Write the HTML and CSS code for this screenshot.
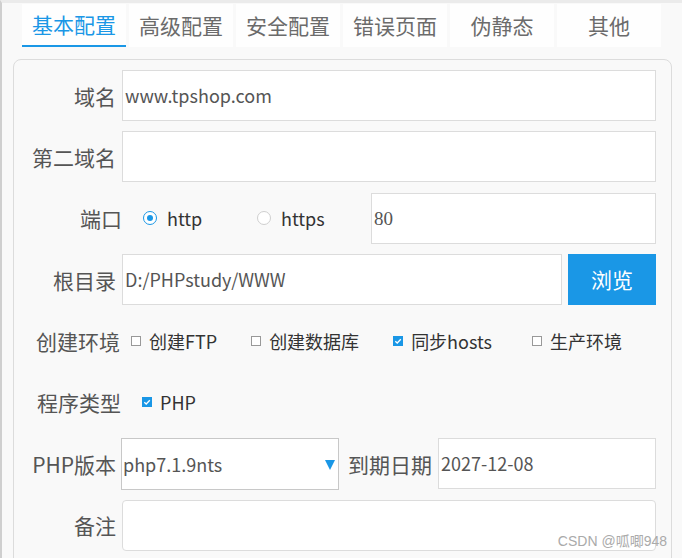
FILE: index.html
```html
<!DOCTYPE html>
<html lang="zh">
<head>
<meta charset="utf-8">
<title>站点配置</title>
<link rel="stylesheet" href="styles.css">
</head>
<body>
<div class="page">
  <nav class="tabs">
    <div class="tab active">基本配置</div>
    <div class="tab">高级配置</div>
    <div class="tab">安全配置</div>
    <div class="tab">错误页面</div>
    <div class="tab">伪静态</div>
    <div class="tab">其他</div>
  </nav>
  <div class="panel">
    <div class="row">
      <div class="label">域名</div>
      <div class="field grow">www.tpshop.com</div>
    </div>
    <div class="row">
      <div class="label">第二域名</div>
      <div class="field grow"></div>
    </div>
    <div class="row">
      <div class="label label-wide">端口</div>
      <div class="radios">
        <span class="radio-item first"><span class="radio on"></span><span class="opt">http</span></span>
        <span class="radio-item"><span class="radio"></span><span class="opt">https</span></span>
      </div>
      <div class="field grow num">80</div>
    </div>
    <div class="row">
      <div class="label">根目录</div>
      <div class="field grow">D:/PHPstudy/WWW</div>
      <div class="btn">浏览</div>
    </div>
    <div class="row">
      <div class="label label-env">创建环境</div>
      <div class="checks">
        <span class="check-item"><span class="box"></span><span class="opt">创建FTP</span></span>
        <span class="check-item"><span class="box"></span><span class="opt">创建数据库</span></span>
        <span class="check-item"><span class="box on"><svg viewBox="0 0 10 10" width="10" height="10"><path d="M2.3 5.2 L4.2 7 L7.8 3.2" fill="none" stroke="#fff" stroke-width="1.3"/></svg></span><span class="opt">同步hosts</span></span>
        <span class="check-item last"><span class="box"></span><span class="opt">生产环境</span></span>
      </div>
    </div>
    <div class="row">
      <div class="label label-type">程序类型</div>
      <div class="checks checks-type">
        <span class="check-item"><span class="box on"><svg viewBox="0 0 10 10" width="10" height="10"><path d="M2.3 5.2 L4.2 7 L7.8 3.2" fill="none" stroke="#fff" stroke-width="1.3"/></svg></span><span class="opt">PHP</span></span>
      </div>
    </div>
    <div class="row">
      <div class="label">PHP版本</div>
      <div class="select">php7.1.9nts<span class="arrow"></span></div>
      <div class="label-mid">到期日期</div>
      <div class="field grow">2027-12-08</div>
    </div>
    <div class="row">
      <div class="label">备注</div>
      <div class="field grow note"></div>
    </div>
  </div>
  <div class="watermark">CSDN @呱唧948</div>
</div>
</body>
</html>
```
FILE: styles.css
```css
html, body {
  margin: 0;
  padding: 0;
}
body {
  width: 682px;
  height: 558px;
  overflow: hidden;
  background: #f9f9f9;
  font-family: "Noto Sans CJK SC", "Noto Sans", sans-serif;
}
.page {
  position: relative;
  height: 555px;
  border-top: 3px solid #ebebeb;
  border-left: 2px solid #cfcfcf;
}
.tabs {
  display: flex;
  margin-left: 20px;
  margin-top: 1px;
  height: 43px;
}
.tab {
  width: 104px;
  margin-right: 3px;
  background: #fefefe;
  color: #6b6b6b;
  font-size: 21px;
  line-height: 43px;
  text-align: center;
  box-sizing: border-box;
}
.tab.active {
  color: #1a97e6;
  border-bottom: 2px solid #1a97e6;
  line-height: 41px;
}
.panel {
  margin-top: 12px;
  margin-left: 11px;
  width: 659px;
  height: 510px;
  box-sizing: border-box;
  border: 1px solid #dcdcdc;
  border-radius: 8px;
  padding: 10px 15px 0 0;
  display: flex;
  flex-direction: column;
  gap: 10.4px;
}
.row {
  display: flex;
  align-items: center;
  height: 51px;
}
.label {
  width: 102px;
  margin-right: 6px;
  text-align: right;
  font-size: 21px;
  color: #555;
  flex: none;
}
.label-wide { width: 108px; margin-right: 0; }
.label-env { width: 106px; margin-right: 0; }
.label-type { width: 107px; margin-right: 0; }
.field {
  height: 51px;
  box-sizing: border-box;
  border: 1px solid #dcdcdc;
  background: #fff;
  font-size: 18px;
  color: #555;
  line-height: 49px;
  padding-left: 2px;
}
.grow { flex: 1; }
.num { font-family: "Liberation Serif", serif; font-size: 19px; }
.note { border-radius: 4px; }
.radios {
  display: flex;
  align-items: center;
  margin-left: 21px;
}
.radio-item {
  display: flex;
  align-items: center;
  width: 114px;
}
.radio {
  width: 14px;
  height: 14px;
  box-sizing: border-box;
  border: 1px solid #cfcfcf;
  border-radius: 50%;
  background: #fff;
  margin-right: 10px;
  position: relative;
}
.radio.on { border-color: #1a97e6; }
.radio.on::after {
  content: "";
  position: absolute;
  left: 3px;
  top: 3px;
  width: 6px;
  height: 6px;
  border-radius: 50%;
  background: #1a97e6;
}
.opt {
  font-size: 18px;
  color: #333;
}
.checks {
  display: flex;
  align-items: center;
  margin-left: 11px;
  gap: 34px;
}
.checks-type { margin-left: 21px; }
.check-item {
  display: flex;
  align-items: center;
}
.check-item.last { margin-left: 6px; }
.box {
  width: 10px;
  height: 10px;
  box-sizing: border-box;
  border: 1px solid #999;
  background: #fff;
  margin-right: 8px;
  display: flex;
}
.box.on {
  border: none;
  background: #1a97e6;
}
.btn {
  width: 88px;
  height: 51px;
  margin-left: 6px;
  background: #1a97e6;
  color: #fff;
  font-size: 21px;
  line-height: 51px;
  text-align: center;
}
.select {
  width: 218px;
  height: 52px;
  margin-left: -1px;
  box-sizing: border-box;
  border: 1px solid #c8c8c8;
  background: #fff;
  font-size: 18px;
  color: #555;
  line-height: 50px;
  padding-left: 1px;
  position: relative;
}
.arrow {
  position: absolute;
  right: 3px;
  top: 21px;
  width: 0;
  height: 0;
  border-left: 5px solid transparent;
  border-right: 5px solid transparent;
  border-top: 10px solid #1a97e6;
}
.label-mid {
  margin: 0 6px 0 9px;
  font-size: 21px;
  color: #555;
}
.watermark {
  position: absolute;
  right: 15px;
  bottom: 8px;
  font-size: 14px;
  color: #aaa;
  font-family: "Liberation Sans", "Noto Sans CJK SC", sans-serif;
}
```
